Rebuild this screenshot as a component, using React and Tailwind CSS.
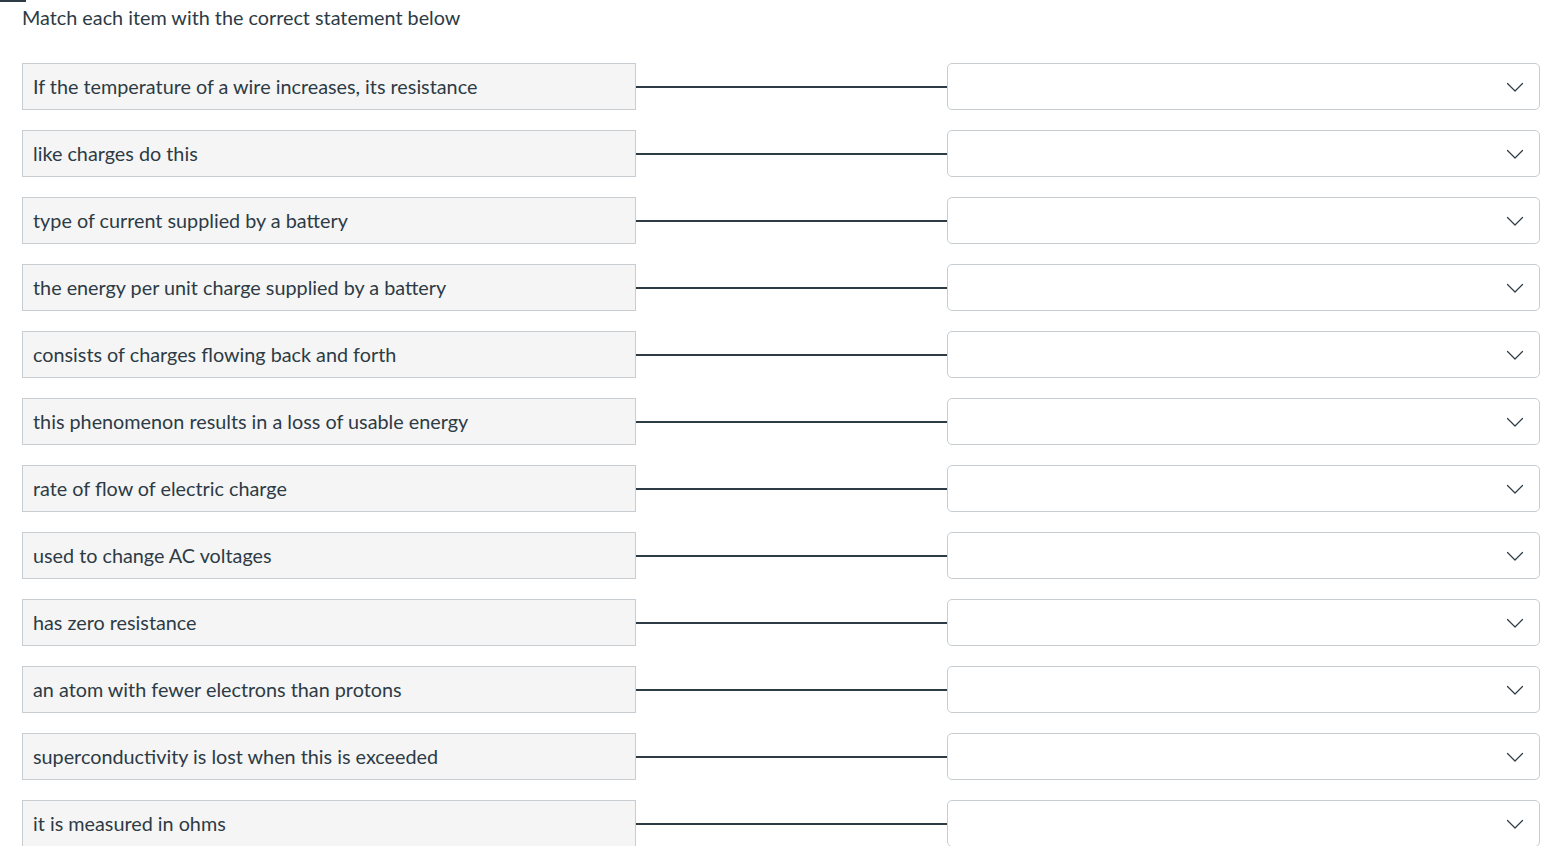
import React from 'react';

const items = [
    'If the temperature of a wire increases, its resistance',
    'like charges do this',
    'type of current supplied by a battery',
    'the energy per unit charge supplied by a battery',
    'consists of charges flowing back and forth',
    'this phenomenon results in a loss of usable energy',
    'rate of flow of electric charge',
    'used to change AC voltages',
    'has zero resistance',
    'an atom with fewer electrons than protons',
    'superconductivity is lost when this is exceeded',
    'it is measured in ohms'
];

const Chevron = () => (
    <svg width="18" height="10" viewBox="0 0 18 10" fill="none" stroke="#2d3b45" strokeWidth="1.2" strokeLinecap="round" strokeLinejoin="round">
        <polyline points="1.5,1.5 9,9 16.5,1.5" />
    </svg>
);

const MatchRow = ({ text }) => (
    <div className="flex items-center h-[47px]">
        <div className="w-[614px] h-full flex items-center bg-[#f5f5f5] border border-[#c7cdd1] pl-[10px] text-[19.8px] text-[#2d3b45] shrink-0">
            {text}
        </div>
        <div className="w-[311px] h-[2px] bg-[#2d3b45] shrink-0" />
        <div className="flex-1 h-full flex items-center justify-end pr-[15px] bg-white border border-[#c7cdd1] rounded-[5px]">
            <Chevron />
        </div>
    </div>
);

export default function App() {
    return (
        <div className="relative w-full h-[846px] overflow-hidden bg-white font-['Lato','Liberation_Sans',sans-serif]">
            {/* top-left tab marker */}
            <div className="absolute top-0 left-0 w-[26px] h-[2px] bg-[#2d3b45]" />
            <div className="pl-[22px] pr-[21px] pt-[5px]">
                <div className="text-[19.8px] leading-[24px] text-[#2d3b45] mb-[34px]">
                    Match each item with the correct statement below
                </div>
                <div className="flex flex-col gap-[20px]">
                    {items.map((t) => (
                        <MatchRow key={t} text={t} />
                    ))}
                </div>
            </div>
        </div>
    );
}
